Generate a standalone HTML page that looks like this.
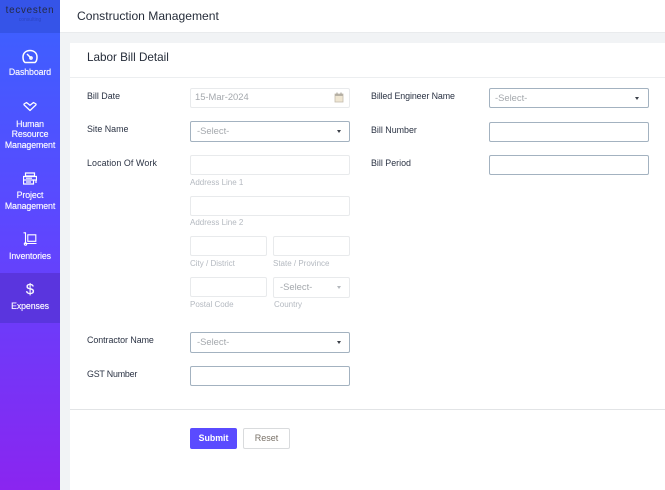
<!DOCTYPE html>
<html><head><meta charset="utf-8">
<style>
*{box-sizing:border-box}
html,body{margin:0;padding:0}
body{width:665px;height:490px;overflow:hidden;background:#f1f3f5;font-family:"Liberation Sans",sans-serif;position:relative}
.a{position:absolute}
#side{left:0;top:0;width:60px;height:490px;background:linear-gradient(180deg,#3a62ff 0%,#5c48ff 45%,#8a25f0 100%)}
.n{position:absolute;left:0;width:60px;text-align:center;color:#f6f4ff;font-size:8.8px;line-height:10.5px;letter-spacing:-.1px;text-shadow:0 0 .4px #fff}
.l{position:absolute;font-size:8.9px;color:#2b3344;line-height:12px;white-space:nowrap}
.h{position:absolute;font-size:8px;color:#b4b9c0;line-height:10px;white-space:nowrap}
.i{position:absolute;height:20px;background:#fff;border:1px solid #e8eaec;border-radius:2px}
.d{border-color:#a3b2c0}
.s{position:absolute;font-size:9.4px;color:#a4a8ad;line-height:12px;white-space:nowrap}
.c{position:absolute;width:0;height:0;border-left:2.5px solid transparent;border-right:2.5px solid transparent;border-top:3px solid #3a3f48}
</style></head><body>
<div class="a" id="side"></div>
<div class="a" style="left:0;top:0;width:60px;height:33px;background:#3554e8"></div>
<div class="a" style="left:0;top:4px;width:60px;text-align:center;font-size:9.8px;letter-spacing:.75px;color:#242a44;line-height:14px">tecvesten</div>
<div class="a" style="left:0;top:16px;width:60px;text-align:center;font-size:5px;color:#2b45c4;line-height:8px">consulting</div>
<div class="a" style="left:0;top:273px;width:60px;height:50px;background:#5a35de"></div>

<svg class="a" style="left:22px;top:49px" width="16" height="15" viewBox="0 0 16 15" fill="none" stroke="#fff" stroke-width="1.500"><path d="M3 13.500h10c1.500-1 2-3 2-5.500C15 4 12 1.500 8 1.500S1 4 1 8c0 2.500.5 4.500 2 5.500z"/><path d="M5 5l4 4"/><circle cx="9" cy="9" r="1.100"/></svg>
<div class="n" style="top:67px">Dashboard</div>
<svg class="a" style="left:23px;top:101px" width="14" height="11" viewBox="0 0 14 11" fill="none" stroke="#fff" stroke-width="1.300" stroke-linejoin="round"><path d="M1 3l2.500-1.500L7 4.300l3.500-2.800L13 3v.8l-6 5.700-6-5.700z"/></svg>
<div class="n" style="top:118.500px">Human<br>Resource<br>Management</div>
<svg class="a" style="left:23px;top:172px" width="14" height="13" viewBox="0 0 14 13" fill="none" stroke="#fff" stroke-width="1.200"><path d="M2.500 1h9v3h-9zM.5 4.500h13v3.500h-13zM.5 8h10v4h-10zM13 8v3M3 6.200h6M3 10h5"/></svg>
<div class="n" style="top:190px">Project<br>Management</div>
<svg class="a" style="left:23px;top:232px" width="14" height="14" viewBox="0 0 14 14" fill="none" stroke="#fff" stroke-width="1.100"><path d="M.5 .8h2v10.700h11M4.800 2.800h8v6.500h-8z"/><circle cx="2.500" cy="12" r="1.200"/></svg>
<div class="n" style="top:251px">Inventories</div>
<div class="n" style="top:282px;font-size:15px;line-height:16px;letter-spacing:0">$</div>
<div class="n" style="top:301px">Expenses</div>

<div class="a" style="left:60px;top:0;width:605px;height:33px;background:#fff;border-bottom:1px solid #e9ebed"></div>
<div class="a" style="left:77px;top:9px;font-size:12.1px;line-height:15px;color:#262d3a;white-space:nowrap">Construction Management</div>

<div class="a" style="left:70px;top:43px;width:595px;height:447px;background:#fff"></div>
<div class="a" style="left:70px;top:77px;width:595px;height:1px;background:#eceef0"></div>
<div class="a" style="left:87px;top:50px;font-size:11.7px;line-height:16px;color:#262d3a;white-space:nowrap">Labor Bill Detail</div>

<div class="l" style="left:87px;top:90px">Bill Date</div>
<div class="i" style="left:190px;top:88px;width:160px;height:20px"></div>
<div class="s" style="left:195px;top:91px">15-Mar-2024</div>
<svg class="a" style="left:334px;top:92px" width="10" height="11" viewBox="0 0 10 11"><rect x="1" y="2" width="8" height="8" fill="#efe6d2" stroke="#c4bcae" stroke-width=".8"/><rect x="1" y="2" width="8" height="2" fill="#b8b2a6"/><path d="M3 .5v2M7 .5v2" stroke="#a39e94"/></svg>

<div class="l" style="left:87px;top:123px">Site Name</div>
<div class="i d" style="left:190px;top:121px;width:160px;height:21px"></div>
<div class="s" style="left:197px;top:125px">-Select-</div>
<div class="c" style="left:337px;top:130px"></div>

<div class="l" style="left:87px;top:157px;letter-spacing:.1px">Location Of Work</div>
<div class="i" style="left:190px;top:155px;width:160px"></div>
<div class="h" style="left:190px;top:178px">Address Line 1</div>
<div class="i" style="left:190px;top:196px;width:160px"></div>
<div class="h" style="left:190px;top:218px">Address Line 2</div>
<div class="i" style="left:190px;top:236px;width:77px"></div>
<div class="i" style="left:273px;top:236px;width:77px"></div>
<div class="h" style="left:190px;top:259px">City / District</div>
<div class="h" style="left:273px;top:259px">State / Province</div>
<div class="i" style="left:190px;top:277px;width:77px"></div>
<div class="i" style="left:273px;top:277px;width:77px;height:21px"></div>
<div class="s" style="left:280px;top:281px">-Select-</div>
<div class="c" style="left:337px;top:286px;border-top-color:#b4b8bd"></div>
<div class="h" style="left:190px;top:300px">Postal Code</div>
<div class="h" style="left:274px;top:300px">Country</div>

<div class="l" style="left:87px;top:334px;letter-spacing:-.05px">Contractor Name</div>
<div class="i d" style="left:190px;top:332px;width:160px;height:21px"></div>
<div class="s" style="left:197px;top:336px">-Select-</div>
<div class="c" style="left:337px;top:341px"></div>
<div class="l" style="left:87px;top:368px;letter-spacing:-.2px">GST Number</div>
<div class="i d" style="left:190px;top:366px;width:160px"></div>

<div class="l" style="left:371px;top:90px;letter-spacing:-.1px">Billed Engineer Name</div>
<div class="i d" style="left:489px;top:88px;width:160px"></div>
<div class="s" style="left:495px;top:92px">-Select-</div>
<div class="c" style="left:635px;top:97px"></div>
<div class="l" style="left:371px;top:124px">Bill Number</div>
<div class="i d" style="left:489px;top:122px;width:160px"></div>
<div class="l" style="left:371px;top:157px">Bill Period</div>
<div class="i d" style="left:489px;top:155px;width:160px"></div>

<div class="a" style="left:70px;top:409px;width:595px;height:1px;background:#e2e4e6"></div>
<div class="a" style="left:190px;top:428px;width:47px;height:21px;background:#5a4bff;border-radius:2px;color:#fff;font-size:8.8px;font-weight:bold;text-align:center;line-height:21px">Submit</div>
<div class="a" style="left:243px;top:428px;width:47px;height:21px;background:#fff;border:1px solid #d9dbdd;border-radius:2px;color:#7a7268;font-size:9px;text-align:center;line-height:19px">Reset</div>
</body></html>
